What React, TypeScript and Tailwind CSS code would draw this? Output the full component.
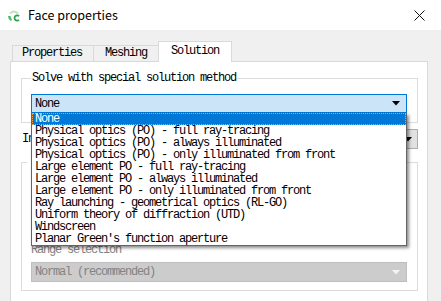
import React from 'react';

const mono = "font-['Liberation_Mono',monospace] text-[12px] tracking-[-1.2px]";

const options = [
  'None',
  'Physical optics (PO) - full ray-tracing',
  'Physical optics (PO) - always illuminated',
  'Physical optics (PO) - only illuminated from front',
  'Large element PO - full ray-tracing',
  'Large element PO - always illuminated',
  'Large element PO - only illuminated from front',
  'Ray launching - geometrical optics (RL-GO)',
  'Uniform theory of diffraction (UTD)',
  'Windscreen',
  "Planar Green's function aperture",
];

function Arrow({ color = '#000' }: { color?: string }) {
  return (
    <svg width="8" height="5" viewBox="0 0 8 5">
      <path d="M0 0 H8 L4 4.5 Z" fill={color} />
    </svg>
  );
}

function Logo() {
  return (
    <svg width="14" height="14" viewBox="0 0 14 14">
      <path d="M2 5 Q7 0 12 5 L10 6 Q7 3 4 6 Z" fill="#b9e3c3" />
      <path d="M1 8 Q1 11 4 13 L5 11.5 Q3.5 10 3.5 8 Z" fill="#4cb860" />
      <path d="M12 8.2 A2.6 2.6 0 1 0 12 11.8" stroke="#2f9e4a" strokeWidth="1.8" fill="none" />
    </svg>
  );
}

export default function App() {
  return (
    <div className="w-[441px] h-[301px] overflow-hidden bg-[#f0f0f0] flex flex-col">
      {/* Title bar */}
      <div className="h-[30px] shrink-0 bg-white flex items-center pl-[7px] pr-[16px]">
        <Logo />
        <span className="ml-[7px] text-[12.5px] text-black font-['Noto_Sans_CJK_SC','Noto_Sans',sans-serif]">
          Face properties
        </span>
        <svg className="ml-auto" width="11" height="11" viewBox="0 0 11 11">
          <path d="M0.5 0.5 L10.5 10.5 M10.5 0.5 L0.5 10.5" stroke="#111" strokeWidth="1" />
        </svg>
      </div>

      <div className="pl-[10px] pr-[13px] pt-[11px] flex flex-col">
        {/* Tabs */}
        <div className={`flex items-end h-[20px] pl-[2px] ${mono} text-black`}>
          <div className="w-[82px] h-[16px] border border-b-0 border-[#d9d9d9] bg-[#f0f0f0] pl-[9px] leading-[15px]">
            Properties
          </div>
          <div className="w-[66px] h-[16px] -ml-px border border-b-0 border-[#d9d9d9] bg-[#f0f0f0] pl-[11px] leading-[15px]">
            Meshing
          </div>
          <div className="relative z-10 w-[74px] h-[21px] -ml-px -mb-px border border-b-0 border-[#d9d9d9] bg-white pl-[12px] leading-[19px]">
            Solution
          </div>
        </div>

        {/* Panel */}
        <div className={`h-[260px] border border-[#d9d9d9] bg-white pl-[10px] ${mono}`}>
          <fieldset className="mt-[10px] w-[397px] border border-[#dcdcdc] pb-[9px]">
            <legend className="ml-[9px] px-[1px] leading-[12px] text-black">
              Solve with special solution method
            </legend>
            <div className="relative ml-[9px] mt-[10px] w-[376px]">
              <div className="h-[19px] border border-[#0078d7] bg-[#cce4f7] flex items-center pl-[3px] pr-[6px] text-black">
                <span className="leading-[12px]">None</span>
                <span className="ml-auto flex">
                  <Arrow />
                </span>
              </div>
              {/* Open list */}
              <div className="absolute z-30 left-0 top-full w-[376px] bg-white border border-t-0 border-[#646464] shadow-[2px_2px_3px_rgba(0,0,0,0.45)]">
                {options.map((o, i) =>
                  i === 0 ? (
                    <div
                      key={o}
                      className="h-[12px] leading-[10px] bg-[#0078d7] text-white border border-dotted border-[#f0a040] pl-[2px] whitespace-pre"
                    >
                      {o}
                    </div>
                  ) : (
                    <div key={o} className="h-[12px] leading-[12px] pl-[3px] text-black whitespace-pre">
                      {o}
                    </div>
                  )
                )}
              </div>
            </div>
          </fieldset>

          <div className="mt-[6px] w-[397px] h-[20px] flex items-center">
            <span className="pl-[1px] leading-[12px] text-black">In</span>
            <div className="ml-auto w-[200px] h-[20px] border border-[#adadad] bg-[#e1e1e1] flex items-center justify-end pr-[5px]">
              <Arrow />
            </div>
          </div>

          <fieldset className="mt-[7px] w-[397px] border border-[#dcdcdc] pb-[8px]">
            <legend className="ml-[5px] h-[12px] w-[120px]" />
            <div className="ml-[9px] mt-[76px] leading-[12px] text-[#838383]">Range selection</div>
            <div className="ml-[9px] mt-[6px] w-[376px] h-[20px] border border-[#bfbfbf] bg-[#cccccc] flex items-center pl-[3px] pr-[6px] text-[#838383]">
              <span className="leading-[12px]">Normal (recommended)</span>
              <span className="ml-auto flex">
                <Arrow color="#f4f4f4" />
              </span>
            </div>
          </fieldset>
        </div>
      </div>
    </div>
  );
}
